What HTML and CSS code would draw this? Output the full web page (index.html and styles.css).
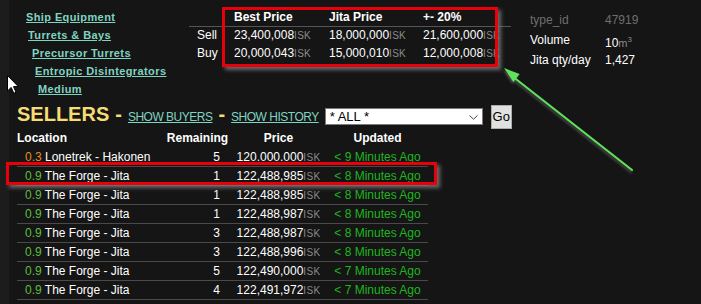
FILE: index.html
```html
<!DOCTYPE html>
<html lang="en">
<head>
  <meta charset="UTF-8" />
  <meta name="viewport" content="width=device-width, initial-scale=1.0" />
  <title>Medium Entropic Disintegrators - Market</title>
  <link rel="stylesheet" href="styles.css">
</head>
<body>
  <div class="page">
    <div class="top">
      <nav class="crumbs">
        <a href="#" class="lvl0">Ship Equipment</a>
        <a href="#" class="lvl1">Turrets &amp; Bays</a>
        <a href="#" class="lvl2">Precursor Turrets</a>
        <a href="#" class="lvl3">Entropic Disintegrators</a>
        <a href="#" class="lvl4">Medium</a>
      </nav>

      <div class="quote">
        <div class="qh"></div>
        <div class="qh">Best Price</div>
        <div class="qh">Jita Price</div>
        <div class="qh">+- 20%</div>

        <div>Sell</div>
        <div>23,400,008<span class="isk">ISK</span></div>
        <div>18,000,000<span class="isk">ISK</span></div>
        <div>21,600,000<span class="isk">ISK</span></div>

        <div>Buy</div>
        <div>20,000,043<span class="isk">ISK</span></div>
        <div>15,000,010<span class="isk">ISK</span></div>
        <div>12,000,008<span class="isk">ISK</span></div>
      </div>

      <div class="info">
        <div class="dim">type_id</div><div class="dim">47919</div>
        <div>Volume</div><div>10<span class="unit">m<sup>3</sup></span></div>
        <div>Jita qty/day</div><div>1,427</div>
      </div>
    </div>

    <div class="bar">
      <h2>SELLERS</h2>
      <span class="dash">-</span>
      <a href="#">SHOW BUYERS</a>
      <span class="dash">-</span>
      <a href="#">SHOW HISTORY</a>
      <span class="pick">
        <select><option>* ALL *</option></select>
        <svg class="chev" width="9" height="5" viewBox="0 0 9 5"><polyline points="0.5,0.5 4.5,4.2 8.5,0.5" fill="none" stroke="#444" stroke-width="1"/></svg>
      </span>
      <button>Go</button>
    </div>

    <div class="orders">
      <div class="row head">
        <div class="loc">Location</div>
        <div class="qty">Remaining</div>
        <div class="price">Price</div>
        <div class="upd">Updated</div>
      </div>
      <div class="row">
        <div class="loc"><span class="sec low">0.3</span> Lonetrek - Hakonen</div>
        <div class="qty">5</div>
        <div class="price">120.000.000<span class="isk">ISK</span></div>
        <div class="upd">&lt; 9 Minutes Ago</div>
      </div>
      <div class="row">
        <div class="loc"><span class="sec">0.9</span> The Forge - Jita</div>
        <div class="qty">1</div>
        <div class="price">122,488,985<span class="isk">ISK</span></div>
        <div class="upd">&lt; 8 Minutes Ago</div>
      </div>
      <div class="row">
        <div class="loc"><span class="sec">0.9</span> The Forge - Jita</div>
        <div class="qty">1</div>
        <div class="price">122,488,985<span class="isk">ISK</span></div>
        <div class="upd">&lt; 8 Minutes Ago</div>
      </div>
      <div class="row">
        <div class="loc"><span class="sec">0.9</span> The Forge - Jita</div>
        <div class="qty">1</div>
        <div class="price">122,488,987<span class="isk">ISK</span></div>
        <div class="upd">&lt; 8 Minutes Ago</div>
      </div>
      <div class="row">
        <div class="loc"><span class="sec">0.9</span> The Forge - Jita</div>
        <div class="qty">3</div>
        <div class="price">122,488,987<span class="isk">ISK</span></div>
        <div class="upd">&lt; 8 Minutes Ago</div>
      </div>
      <div class="row">
        <div class="loc"><span class="sec">0.9</span> The Forge - Jita</div>
        <div class="qty">3</div>
        <div class="price">122,488,996<span class="isk">ISK</span></div>
        <div class="upd">&lt; 8 Minutes Ago</div>
      </div>
      <div class="row">
        <div class="loc"><span class="sec">0.9</span> The Forge - Jita</div>
        <div class="qty">5</div>
        <div class="price">122,490,000<span class="isk">ISK</span></div>
        <div class="upd">&lt; 7 Minutes Ago</div>
      </div>
      <div class="row">
        <div class="loc"><span class="sec">0.9</span> The Forge - Jita</div>
        <div class="qty">4</div>
        <div class="price">122,491,972<span class="isk">ISK</span></div>
        <div class="upd">&lt; 7 Minutes Ago</div>
      </div>
    </div>
  </div>

  <!-- screenshot annotations -->
  <div class="mark mark-quote"></div>
  <div class="mark mark-row"></div>

  <svg class="arrow" width="701" height="304" viewBox="0 0 701 304">
    <line x1="632" y1="170" x2="512" y2="76" stroke="#5fe25a" stroke-width="2.2" stroke-linecap="round"/>
    <polygon points="504,68 519.6,74.1 513.4,81.9" fill="#5fe25a"/>
  </svg>

  <svg class="cursor" width="13" height="20" viewBox="0 0 13 20">
    <path d="M0.5 0.5 L0.5 16 L4.2 12.4 L6.8 18.3 L9 17.3 L6.5 11.6 L11.3 11.6 Z" fill="#fff" stroke="#000" stroke-width="1" stroke-linejoin="round"/>
  </svg>
</body>
</html>
```

FILE: styles.css
```css
* {
  box-sizing: border-box;
}

body {
  margin: 0;
  height: 304px;
  overflow: hidden;
  background: #151515;
  border-left: 9px solid #1c1c1c;
  color: #fff;
  font-family: "Liberation Sans", Arial, sans-serif;
  font-size: 12px;
}

a {
  color: #7fd4c1;
}

.page {
  padding-left: 8px;
}

/* top block: breadcrumbs, quick quote, item info */

.top {
  display: flex;
  height: 98px;
}

.crumbs {
  width: 172px;
  padding: 8px 0 0 9px;
}

.crumbs a {
  display: block;
  line-height: 18px;
  font-size: 11px;
  font-weight: bold;
  letter-spacing: 0.4px;
  white-space: nowrap;
}

.crumbs .lvl1 { margin-left: 2px; }
.crumbs .lvl2 { margin-left: 6px; }
.crumbs .lvl3 { margin-left: 9px; }
.crumbs .lvl4 { margin-left: 12px; }

.quote {
  display: grid;
  grid-template-columns: 41px 95px 94px 92px;
  grid-auto-rows: 18px;
  align-self: flex-start;
  margin-top: 8px;
  line-height: 18px;
  white-space: nowrap;
}

.quote > div {
  padding-left: 4px;
}

.quote > div:nth-child(4n+1) {
  padding-left: 8px;
}

.quote .qh {
  height: 19px;
  font-weight: bold;
  border-bottom: 1px solid #555;
}

.isk {
  color: #8a8a8a;
  font-size: 10px;
  letter-spacing: 0.3px;
}

.info {
  display: grid;
  grid-template-columns: 75px auto;
  grid-auto-rows: 20px;
  align-self: flex-start;
  margin: 10px 0 0 19px;
  line-height: 20px;
  white-space: nowrap;
}

.info .dim {
  color: #6e6e6e;
}

.unit {
  color: #8a8a8a;
  font-size: 11px;
}

.unit sup {
  font-size: 8px;
  vertical-align: 5px;
}

/* sellers bar */

.bar {
  display: flex;
  align-items: baseline;
  height: 31px;
  padding-top: 5px;
}

.bar h2 {
  margin: 0;
  font-size: 20px;
  line-height: 22px;
  color: #f7dc76;
}

.bar .dash {
  margin: 0 6px;
  font-size: 20px;
  font-weight: bold;
  line-height: 22px;
  color: #f7dc76;
}

.bar a {
  font-size: 12px;
  letter-spacing: -0.5px;
}

.pick {
  position: relative;
  margin-left: 6px;
}

.pick select {
  appearance: none;
  -webkit-appearance: none;
  width: 158px;
  height: 17px;
  padding: 0 4px;
  border: 1px solid #7a7a7a;
  border-radius: 0;
  background: #fff;
  color: #000;
  font-family: "Liberation Sans", Arial, sans-serif;
  font-size: 13px;
}

.pick .chev {
  position: absolute;
  right: 5px;
  top: 7px;
}

.bar button {
  width: 21px;
  height: 24px;
  margin-left: 8px;
  padding: 0;
  border: 1px solid #adadad;
  border-radius: 0;
  background: #e1e1e1;
  color: #000;
  font-family: "Liberation Sans", Arial, sans-serif;
  font-size: 13px;
}

/* orders */

.orders {
  width: 411px;
}

.row {
  display: grid;
  grid-template-columns: 148px 65px 97px 101px;
  height: 19px;
  line-height: 18px;
  border-bottom: 1px solid #4a4a4a;
  white-space: nowrap;
}

.row.head {
  border-bottom: none;
  font-weight: bold;
  line-height: 19px;
}

.row .loc {
  padding-left: 8px;
}

.row.head .loc {
  padding-left: 0;
}

.row .qty {
  text-align: right;
  padding-right: 10px;
}

.row.head .qty {
  text-align: center;
  padding-right: 0;
}

.row .price,
.row .upd {
  text-align: center;
}

.row .upd {
  color: #1fb51f;
}

.row.head .upd {
  color: #fff;
}

.sec {
  color: #5cbf3e;
}

.sec.low {
  color: #e88c14;
}

/* annotations drawn over the screenshot */

.mark {
  position: absolute;
  border: 3px solid #e8000b;
  box-shadow: 3px 3px 4px rgba(120, 120, 120, 0.85);
}

.mark-quote {
  left: 222px;
  top: 7px;
  width: 276px;
  height: 60px;
}

.mark-row {
  left: 6px;
  top: 162px;
  width: 431px;
  height: 23px;
}

.arrow {
  position: absolute;
  left: 0;
  top: 0;
  pointer-events: none;
  filter: drop-shadow(-1px 2px 1px rgba(90, 90, 90, 0.8));
}

.cursor {
  position: absolute;
  left: 7px;
  top: 75px;
}
```
